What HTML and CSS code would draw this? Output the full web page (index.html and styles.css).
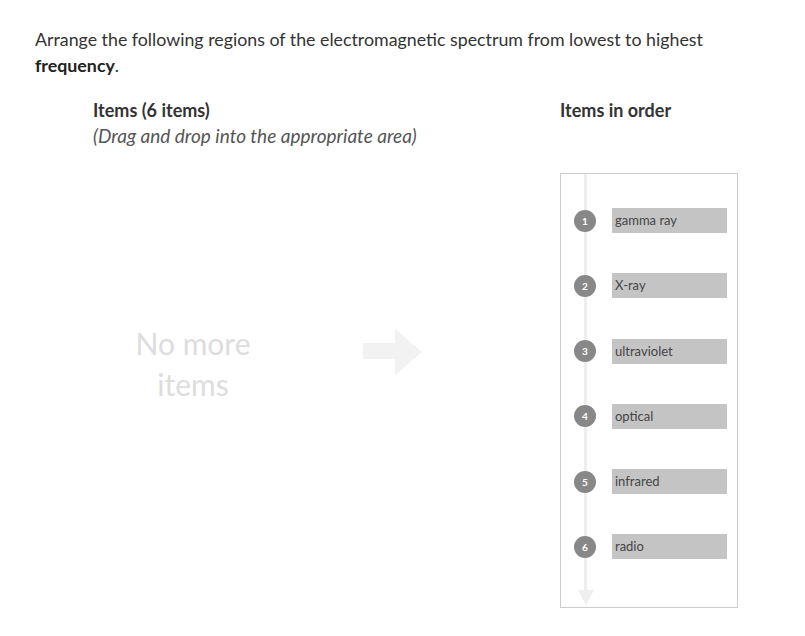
FILE: index.html
```html
<!DOCTYPE html>
<html>
<head>
<meta charset="utf-8">
<link rel="stylesheet" href="styles.css">
</head>
<body>
<div class="page">
  <p class="prompt">Arrange the following regions of the electromagnetic spectrum from lowest to highest <strong>frequency</strong>.</p>
  <div class="board">
    <div class="source">
      <div class="col-title">Items (6 items)</div>
      <div class="col-hint">(Drag and drop into the appropriate area)</div>
      <div class="empty">No more<br>items</div>
    </div>
    <div class="mover">
      <svg class="big-arrow" width="59" height="46" viewBox="0 0 59 46"><path d="M0 14 H32 V0 L59 23 L32 46 V30 H0 Z" fill="#f2f2f2"/></svg>
    </div>
    <div class="target">
      <div class="col-title">Items in order</div>
      <div class="order-box">
        <ol class="order-list">
          <li class="order-item"><span class="num">1</span><span class="bar">gamma ray</span></li>
          <li class="order-item"><span class="num">2</span><span class="bar">X-ray</span></li>
          <li class="order-item"><span class="num">3</span><span class="bar">ultraviolet</span></li>
          <li class="order-item"><span class="num">4</span><span class="bar">optical</span></li>
          <li class="order-item"><span class="num">5</span><span class="bar">infrared</span></li>
          <li class="order-item"><span class="num">6</span><span class="bar">radio</span></li>
        </ol>
      </div>
    </div>
  </div>
</div>
</body>
</html>
```
FILE: styles.css
```css
* { box-sizing: border-box; }
html, body { margin: 0; padding: 0; background: #fff; }
body { font-family: Lato, "Open Sans", sans-serif; color: #333; }
.page { padding: 26px 0 0 35px; }
.prompt { margin: 0; font-size: 17.8px; line-height: 26px; width: 700px; color: #333; }
.prompt strong { font-weight: 700; color: #222; }
.board { display: flex; margin-top: 20px; }
.source { width: 200px; margin-left: 58px; }
.col-title { font-size: 18px; font-weight: 700; line-height: 25px; color: #333; }
.col-hint { font-size: 19px; font-style: italic; line-height: 25px; color: #555; white-space: nowrap; }
.empty { margin-top: 175px; text-align: center; font-size: 30px; line-height: 41px; color: #ddd; }
.mover { margin-left: 70px; padding-top: 231px; }
.big-arrow { display: block; }
.target { margin-left: 138px; width: 178px; }
.target .col-title { margin-bottom: 50px; }
.order-box { position: relative; border: 1px solid #ccc; height: 435px; }
.order-box::before { content: ""; position: absolute; left: 23px; top: 0; width: 3px; height: 417px; background: #eee; }
.order-box::after { content: ""; position: absolute; left: 17px; top: 416px; border-left: 8px solid transparent; border-right: 8px solid transparent; border-top: 15px solid #eee; }
.order-list { position: relative; z-index: 1; list-style: none; margin: 0; padding: 34px 10px 0 13px; display: flex; flex-direction: column; gap: 40.3px; }
.order-item { display: flex; align-items: center; height: 25px; }
.num { width: 22px; height: 22px; border-radius: 50%; background: #888; color: #fff; font-size: 10px; font-weight: 700; display: flex; align-items: center; justify-content: center; flex: none; }
.bar { margin-left: 16px; width: 115px; height: 25px; background: #c4c4c4; color: #444; font-size: 13px; line-height: 25px; padding-left: 3px; }
```
